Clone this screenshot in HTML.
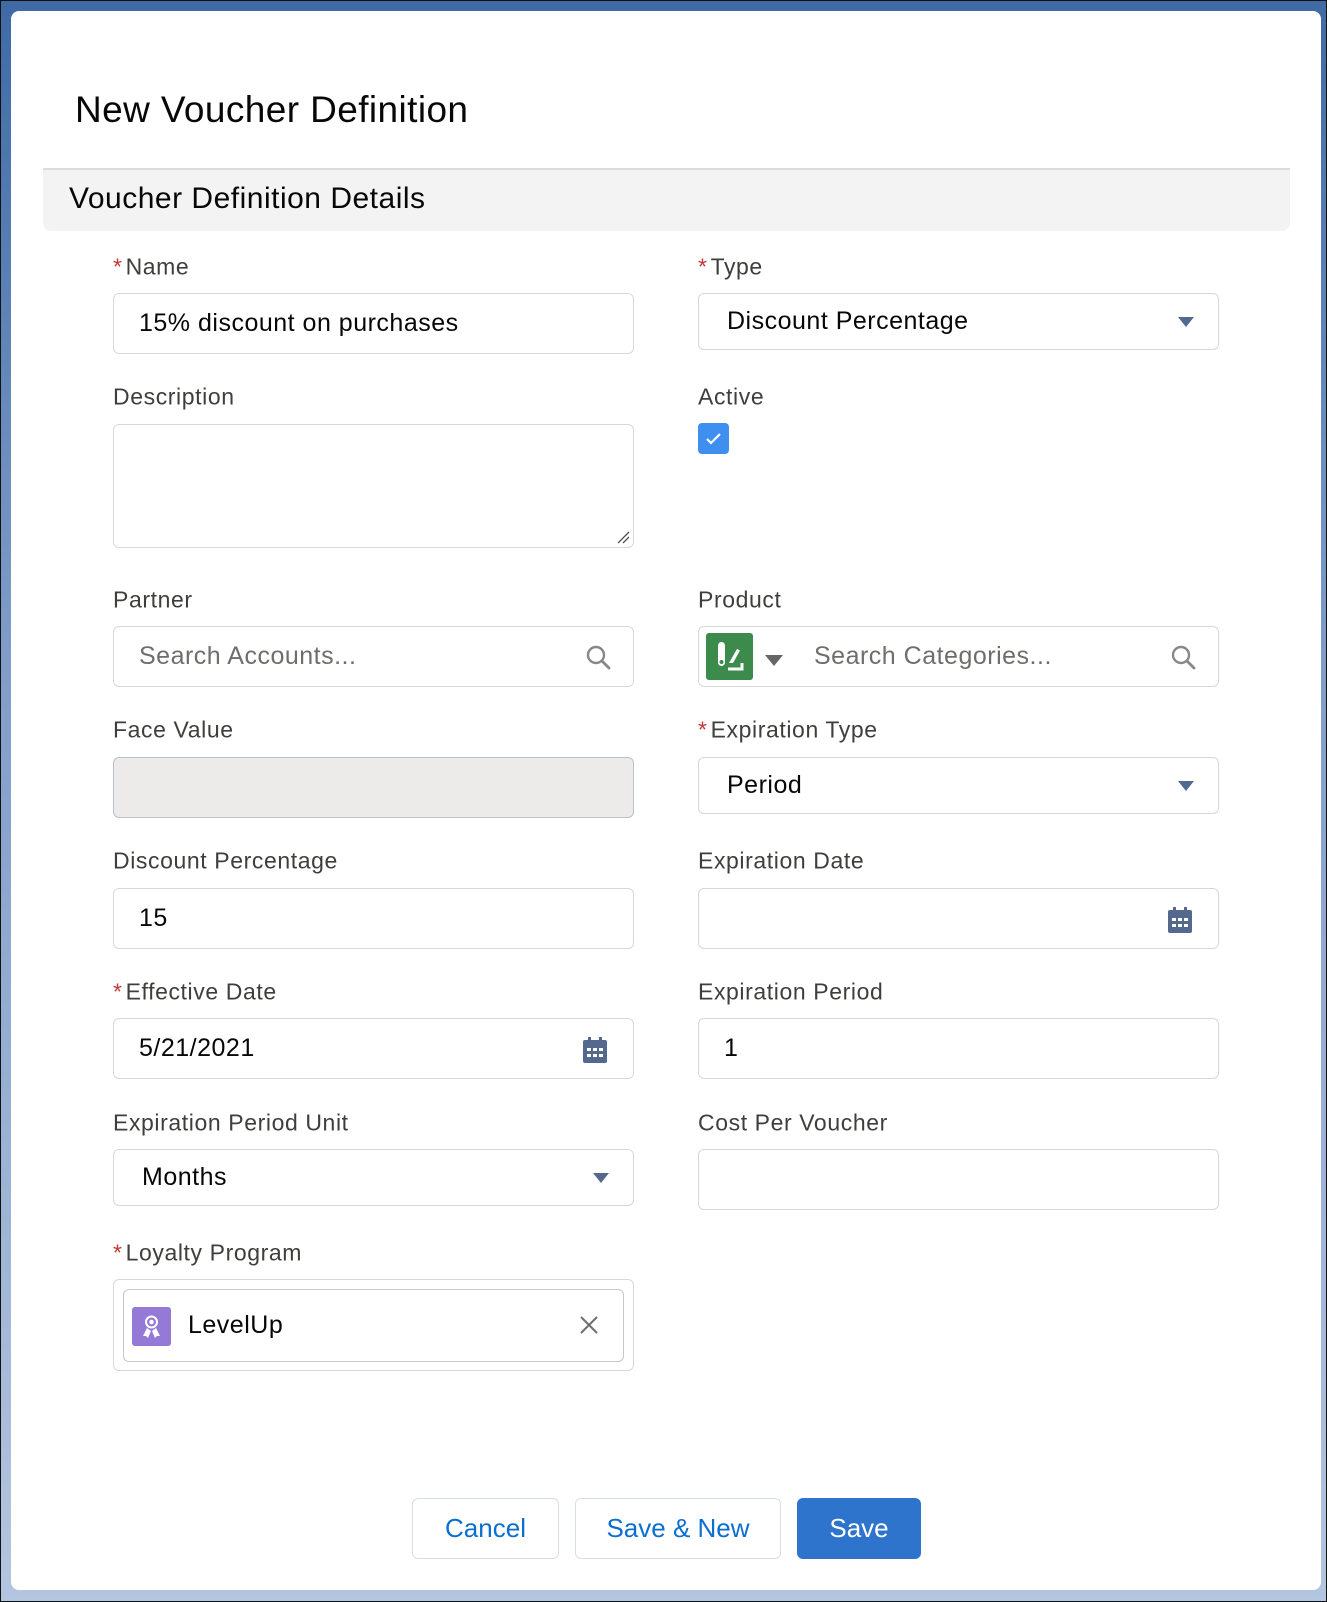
<!DOCTYPE html>
<html><head><meta charset="utf-8"><style>
*{box-sizing:border-box;margin:0;padding:0}
html,body{width:1327px;height:1602px;overflow:hidden}
body{background:linear-gradient(180deg,#3f6aa6 0%,#7f9cc8 40%,#b3c5df 100%);font-family:"Liberation Sans",sans-serif;position:relative;color:#181818;border:1px solid #111}
.card{position:absolute;left:10px;top:10px;width:1310px;height:1579px;background:#fff;border-radius:8px}
.a{position:absolute}
.title{left:64px;top:78px;font-size:37px;letter-spacing:.4px;color:#080707}
.div{left:32px;top:157px;width:1247px;height:2px;background:#dcdcdc}
.sec{left:32px;top:159px;width:1247px;height:61px;background:#f3f3f3;border-radius:0 0 8px 8px}
.sec span{position:absolute;left:26px;top:12px;font-size:30px;letter-spacing:.5px;color:#080707}
.lbl{font-size:23px;letter-spacing:.6px;color:#3e3e3c;transform:translateY(-50%)}
.lbl b{color:#c23934;font-weight:normal;margin-right:3px}
.in{border:1.5px solid #d8d8d8;border-radius:6px;background:#fff;font-size:25px;letter-spacing:.5px;color:#080707;display:flex;align-items:center;padding-left:25px}
.ph{color:#706e6b}
.arrow{position:absolute;right:24px;top:50%;margin-top:-5px;width:0;height:0;border-left:8px solid transparent;border-right:8px solid transparent;border-top:10px solid #54698d}
.btn{border:1.5px solid #d8dde6;border-radius:6px;background:#fff;color:#0b6fd0;font-size:26px;display:flex;align-items:center;justify-content:center}
</style></head><body>
<div class="card">
<div class="a title">New Voucher Definition</div>
<div class="a div"></div>
<div class="a sec"><span>Voucher Definition Details</span></div>

<div class="a lbl" style="left:102px;top:256px"><b>*</b>Name</div>
<div class="a in" style="left:102px;top:282px;width:521px;height:61px">15% discount on purchases</div>

<div class="a lbl" style="left:687px;top:256px"><b>*</b>Type</div>
<div class="a in" style="left:687px;top:282px;width:521px;height:57px;padding-left:28px">Discount Percentage<div class="arrow"></div></div>

<div class="a lbl" style="left:102px;top:386px">Description</div>
<div class="a in" style="left:102px;top:413px;width:521px;height:124px">
<svg class="a" style="right:3px;bottom:3px" width="14" height="14"><path d="M2 13L13 2M7 13L13 7" stroke="#555" stroke-width="1.3"/></svg></div>

<div class="a lbl" style="left:687px;top:386px">Active</div>
<div class="a" style="left:687px;top:412px;width:31px;height:31px;background:#3f8ff0;border-radius:4px"><svg width="31" height="31"><path d="M9 16l4 4 9-9" stroke="#fff" stroke-width="2.2" fill="none"/></svg></div>

<div class="a lbl" style="left:102px;top:589px">Partner</div>
<div class="a in" style="left:102px;top:615px;width:521px;height:61px"><span class="ph">Search Accounts...</span>
<svg class="a" style="right:20px;top:17px" width="28" height="28"><circle cx="11" cy="11" r="8" stroke="#8a8886" stroke-width="2.4" fill="none"/><path d="M17 17l7 7" stroke="#8a8886" stroke-width="2.8" stroke-linecap="round"/></svg></div>

<div class="a lbl" style="left:687px;top:589px">Product</div>
<div class="a in" style="left:687px;top:615px;width:521px;height:61px;padding-left:0">
<div class="a" style="left:7px;top:6px;width:47px;height:47px;background:#3c8a4c;border-radius:3px"><svg width="47" height="47"><rect x="12" y="9" width="7" height="24" rx="3.5" fill="#fff"/><circle cx="15.5" cy="29" r="2" fill="#3c8a4c"/><path d="M23 30l8-14 3 1.5-7 12.5z" fill="#fff"/><path d="M22 36h14v-6" stroke="#fff" stroke-width="3" fill="none"/></svg></div>
<div class="a" style="left:66px;top:28px;border-left:9px solid transparent;border-right:9px solid transparent;border-top:11px solid #666"></div>
<span class="ph" style="margin-left:115px">Search Categories...</span>
<svg class="a" style="right:20px;top:17px" width="28" height="28"><circle cx="11" cy="11" r="8" stroke="#8a8886" stroke-width="2.4" fill="none"/><path d="M17 17l7 7" stroke="#8a8886" stroke-width="2.8" stroke-linecap="round"/></svg></div>

<div class="a lbl" style="left:102px;top:719px">Face Value</div>
<div class="a in" style="left:102px;top:746px;width:521px;height:61px;background:#ecebea;border-color:#b7c1d0"></div>

<div class="a lbl" style="left:687px;top:719px"><b>*</b>Expiration Type</div>
<div class="a in" style="left:687px;top:746px;width:521px;height:57px;padding-left:28px">Period<div class="arrow"></div></div>

<div class="a lbl" style="left:102px;top:850px">Discount Percentage</div>
<div class="a in" style="left:102px;top:877px;width:521px;height:61px">15</div>

<div class="a lbl" style="left:687px;top:850px">Expiration Date</div>
<div class="a in" style="left:687px;top:877px;width:521px;height:61px">
<svg class="a" style="right:25px;top:17px" width="26" height="28"><rect x="6" y="1" width="3" height="5" fill="#54698d"/><rect x="17" y="1" width="3" height="5" fill="#54698d"/><rect x="1" y="4" width="24" height="23" rx="2" fill="#54698d"/><g fill="#fff"><rect x="5" y="12" width="4" height="3"/><rect x="11" y="12" width="4" height="3"/><rect x="17" y="12" width="4" height="3"/><rect x="5" y="18" width="4" height="3"/><rect x="11" y="18" width="4" height="3"/><rect x="17" y="18" width="4" height="3"/></g></svg></div>

<div class="a lbl" style="left:102px;top:981px"><b>*</b>Effective Date</div>
<div class="a in" style="left:102px;top:1007px;width:521px;height:61px">5/21/2021
<svg class="a" style="right:25px;top:17px" width="26" height="28"><rect x="6" y="1" width="3" height="5" fill="#54698d"/><rect x="17" y="1" width="3" height="5" fill="#54698d"/><rect x="1" y="4" width="24" height="23" rx="2" fill="#54698d"/><g fill="#fff"><rect x="5" y="12" width="4" height="3"/><rect x="11" y="12" width="4" height="3"/><rect x="17" y="12" width="4" height="3"/><rect x="5" y="18" width="4" height="3"/><rect x="11" y="18" width="4" height="3"/><rect x="17" y="18" width="4" height="3"/></g></svg></div>

<div class="a lbl" style="left:687px;top:981px">Expiration Period</div>
<div class="a in" style="left:687px;top:1007px;width:521px;height:61px">1</div>

<div class="a lbl" style="left:102px;top:1112px">Expiration Period Unit</div>
<div class="a in" style="left:102px;top:1138px;width:521px;height:57px;padding-left:28px">Months<div class="arrow"></div></div>

<div class="a lbl" style="left:687px;top:1112px">Cost Per Voucher</div>
<div class="a in" style="left:687px;top:1138px;width:521px;height:61px"></div>

<div class="a lbl" style="left:102px;top:1242px"><b>*</b>Loyalty Program</div>
<div class="a" style="left:102px;top:1268px;width:521px;height:92px;border:1.5px solid #d8d8d8;border-radius:6px"></div>
<div class="a in" style="left:112px;top:1278px;width:501px;height:73px;padding-left:64px;border-color:#c9c7c5">LevelUp
<div class="a" style="left:8px;top:17px;width:39px;height:39px;background:#9479d6;border-radius:3px"><svg width="39" height="39"><circle cx="19.5" cy="15" r="5.5" stroke="#fff" stroke-width="2" fill="none"/><circle cx="19.5" cy="15" r="2.3" fill="#fff"/><path d="M15 21l-4 8h3l2 2 3-7M24 21l4 8h-3l-2 2-3-7" fill="#fff"/></svg></div>
<svg class="a" style="right:24px;top:25px" width="20" height="20"><path d="M2 2l16 16M18 2L2 18" stroke="#706e6b" stroke-width="2"/></svg></div>

<div class="a btn" style="left:401px;top:1487px;width:147px;height:61px">Cancel</div>
<div class="a btn" style="left:564px;top:1487px;width:206px;height:61px">Save &amp; New</div>
<div class="a btn" style="left:786px;top:1487px;width:124px;height:61px;background:#2f74cc;border-color:#2f74cc;color:#fff">Save</div>
</div>
</body></html>
